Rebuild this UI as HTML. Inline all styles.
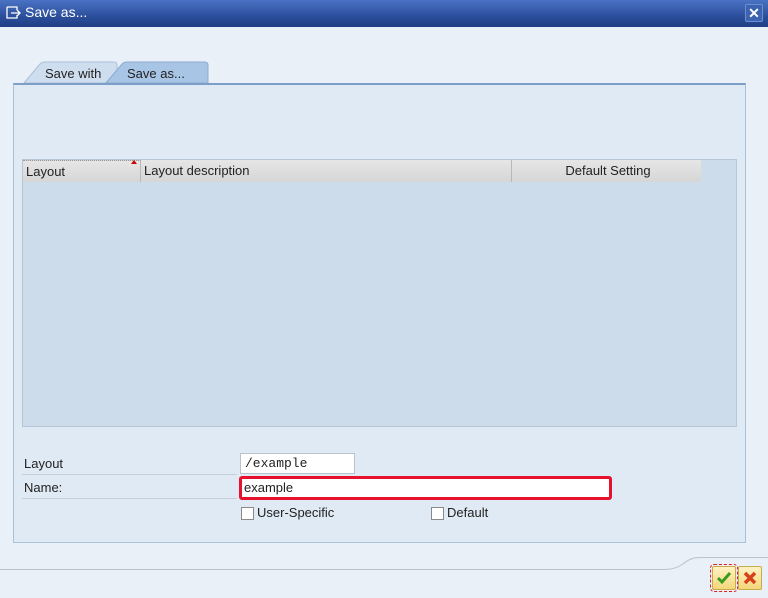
<!DOCTYPE html>
<html><head><style>
*{margin:0;padding:0;box-sizing:border-box}
body{width:768px;height:598px;background:#e9f0f7;font-family:"Liberation Sans",sans-serif;font-size:13px;color:#222;position:relative;overflow:hidden}
.a{position:absolute}
.title{left:0;top:0;width:768px;height:27px;background:linear-gradient(#4a72c4,#2c4f9c 60%,#1f3e85);color:#fff;font-size:14px}
.hdr{top:160px;height:22px;background:linear-gradient(#e6e6e6,#d6d6d6);border-right:1px solid #b8b8b8;line-height:22px;padding-left:3px}
.lbl{left:22px;width:215px;height:22px;line-height:22px;padding-left:2px;border-bottom:1px solid #c5cfd9}
.cb{width:13px;height:13px;background:#fff;border:1px solid #8a8a8a}
</style></head><body>
<div class="a title">
 <svg class="a" style="left:5px;top:5px" width="16" height="16" viewBox="0 0 16 16" fill="none" stroke="#fff" stroke-width="1.3"><path d="M2 2h10v3M2 2v11h10v-3M6 8h9M12 5l3 3-3 3"/></svg>
 <span class="a" style="left:25px;top:4px">Save as...</span>
 <div class="a" style="left:745px;top:4px;width:18px;height:18px;background:#3c63b0;border:1px solid #6d8fd0;border-radius:2px;color:#fff;font-weight:bold;text-align:center;line-height:16px;font-size:14px">✕</div>
</div>
<svg class="a" style="left:0;top:55px" width="768" height="40">
 <path d="M24 28 L40 9 Q42 7 45 7 L113 7 Q117 7 117 10 L117 28Z" fill="#cfdeee" stroke="#a9c0d9"/>
 <path d="M106 28 L122 9 Q124 7 127 7 L204 7 Q208 7 208 10 L208 28Z" fill="#a9c5e6" stroke="#8aaad0"/>
</svg>
<span class="a" style="left:45px;top:66px">Save with</span>
<span class="a" style="left:127px;top:66px">Save as...</span>
<div class="a" style="left:13px;top:83px;width:733px;height:460px;background:#dfeaf4;border:1px solid #a9c0d9;border-top:2px solid #7d9ec6"></div>
<div class="a" style="left:22px;top:159px;width:715px;height:268px;background:#cddcea;border:1px solid #b7c6d6"></div>
<div class="a hdr" style="left:23px;width:118px;border-top:1px dotted #999">Layout</div>
<div class="a" style="left:131px;top:160px;width:0;height:0;border-left:3px solid transparent;border-right:3px solid transparent;border-bottom:4px solid #c00"></div>
<div class="a hdr" style="left:141px;width:371px">Layout description</div>
<div class="a hdr" style="left:512px;width:189px;text-align:center;border-right:none">Default Setting</div>
<div class="a lbl" style="top:453px">Layout</div>
<div class="a lbl" style="top:477px">Name:</div>
<div class="a" style="left:240px;top:453px;width:115px;height:21px;background:#fff;border:1px solid #b9c3cc;font-family:'Liberation Mono',monospace;font-size:13px;line-height:19px;padding-left:4px">/example</div>
<div class="a" style="left:239px;top:476px;width:373px;height:24px;background:#fff;border:3px solid #e8112d;border-radius:3px;line-height:18px;padding-left:2px;font-size:13px">example</div>
<div class="a cb" style="left:241px;top:507px"></div><span class="a" style="left:257px;top:505px">User-Specific</span>
<div class="a cb" style="left:431px;top:507px"></div><span class="a" style="left:447px;top:505px">Default</span>
<svg class="a" style="left:0;top:550px" width="768" height="30"><path d="M0 19.5 H665 Q675 19.5 683 14 Q690 7.5 700 7.5 H768" fill="none" stroke="#b8c4d0"/></svg>
<div class="a" style="left:712px;top:566px;width:24px;height:24px;background:linear-gradient(#fff3c4,#f3d77a);border:1px solid #c9a94a;border-radius:2px;outline:1px dashed #e02020;outline-offset:1px"></div>
<svg class="a" style="left:715px;top:570px" width="18" height="16"><path d="M3 8l4 4 8-9" fill="none" stroke="#3c9a1e" stroke-width="3"/></svg>
<div class="a" style="left:738px;top:566px;width:24px;height:24px;background:linear-gradient(#fff3c4,#f3d77a);border:1px solid #c9a94a;border-radius:2px"></div>
<svg class="a" style="left:743px;top:571px" width="14" height="14"><path d="M2 2l10 10M12 2L2 12" stroke="#d8421a" stroke-width="3.5"/></svg>
</body></html>
